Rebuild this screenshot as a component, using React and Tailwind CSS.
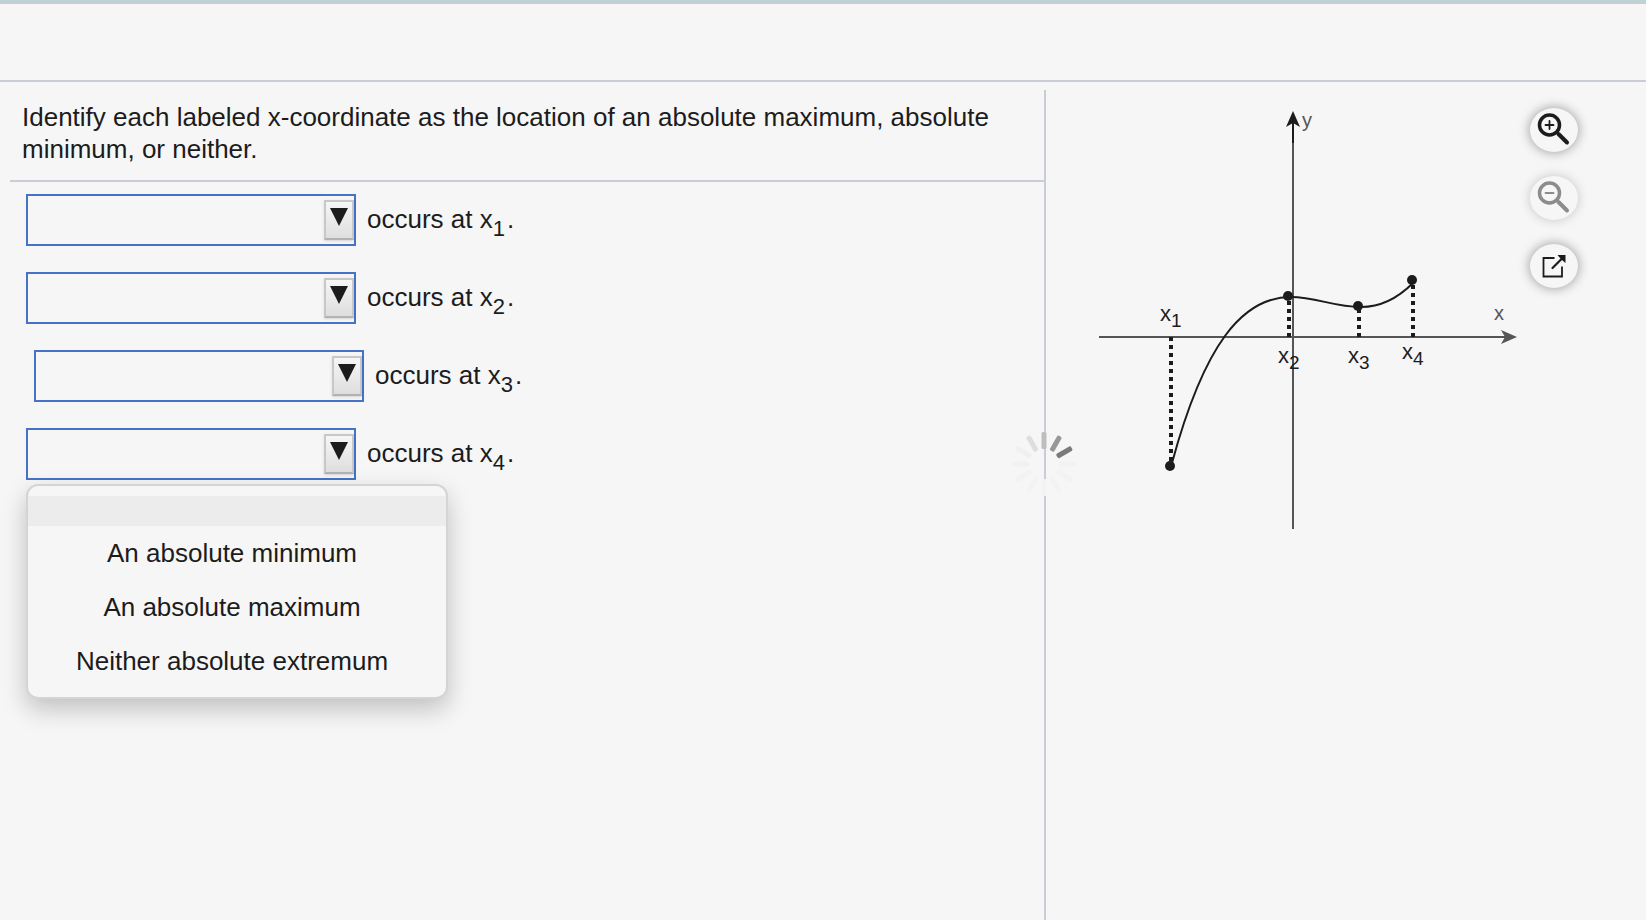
import React, { useState } from "react";

const OPTIONS = ["An absolute minimum", "An absolute maximum", "Neither absolute extremum"];

// tick colours of the loading wheel, clockwise from 12 o'clock
const TICKS = [
  "#bebebe", "#989898", "#7a7a7a", "#f2f2f2", "#f2f2f2", "#f3f3f3",
  "#f3f3f3", "#f3f3f3", "#f2f2f2", "#f1f1f1", "#f0f0f0", "#dedede"
];

function AnswerRow({ index, value, onChange, indent, children }) {
  const id = `answer-${index}`;

  return (
    <div className={indent ? "relative flex items-center pl-2" : "relative flex items-center"}>
      <div className="relative h-[52px] w-[330px]">
        <select
          id={id}
          value={value}
          onChange={(e) => onChange(e.target.value)}
          className="h-full w-full appearance-none border-2 border-[#4673c8] bg-transparent pl-2 pr-9 outline-none"
        >
          <option value=""></option>
          {OPTIONS.map((o) => (
            <option key={o} value={o}>{o}</option>
          ))}
        </select>
        <span className="pointer-events-none absolute right-0.5 top-1.5 flex h-10 w-[30px] justify-center border-2 border-[#c8c8c8] border-b-[#b2b2b2] bg-linear-to-b from-[#f6f6f6] to-[#dedede] pt-1.5 shadow-sm">
          <svg width="18" height="18" viewBox="0 0 18 18" aria-hidden="true">
            <path d="M0 0H18L9 18Z" fill="#1c1c1c" />
          </svg>
        </span>
      </div>
      <label htmlFor={id} className="ml-[11px] pb-0.5 leading-8">
        occurs at x<sub className="mr-0.5 -bottom-2 text-[22px]">{index}</sub>.
      </label>
      {children}
    </div>
  );
}

function OptionMenu({ onPick }) {
  return (
    <ul
      role="listbox"
      aria-label="Answer choices"
      className="absolute left-0 top-14 z-10 w-[422px] rounded-xl border-2 border-[#d4d4d4] bg-[#f6f6f6] pb-[9px] pt-2.5 shadow-[0_10px_24px_rgba(0,0,0,0.22)]"
    >
      <li>
        <button
          type="button"
          role="option"
          aria-selected="true"
          aria-label="No answer"
          onClick={() => onPick("")}
          className="block h-[30px] w-full bg-[#ececec]"
        />
      </li>
      {OPTIONS.map((o) => (
        <li key={o}>
          <button
            type="button"
            role="option"
            aria-selected="false"
            onClick={() => onPick(o)}
            className="block h-[54px] w-full pr-2.5 text-center hover:bg-[#ececec]"
          >
            {o}
          </button>
        </li>
      ))}
    </ul>
  );
}

function Spinner() {
  return (
    <svg className="absolute -right-8 top-[342px]" width="64" height="64" viewBox="-32 -32 64 64" role="img" aria-label="Loading">
      {TICKS.map((color, i) => (
        <rect
          key={i}
          x="-2.5" y="-32" width="5" height="17" rx="1.5"
          fill={color}
          transform={`rotate(${i * 30})`}
        />
      ))}
    </svg>
  );
}

function PointLabel({ x, y, n }) {
  return (
    <text x={x} y={y} fontSize="22" fill="#1c1c1c">
      x<tspan dy="6" fontSize="19">{n}</tspan>
    </text>
  );
}

function Graph() {
  return (
    <svg width="420" height="420" viewBox="1098 110 420 420" className="shrink-0" role="img" aria-label="Graph of a function with four labeled points">
      {/* axes */}
      <g stroke="#555555" strokeWidth="2">
        <path d="M1099 337H1508" />
        <path d="M1293 143V529" />
      </g>
      <path d="M1293 118V143" stroke="#1c1c1c" strokeWidth="2" />
      <path d="M1293 111L1300 127L1293 123L1286 127Z" fill="#1c1c1c" />
      <path d="M1517 337L1501 344L1505 337L1501 330Z" fill="#555555" />
      <text x="1302" y="127" fontSize="20" fill="#555555">y</text>
      <text x="1494" y="320" fontSize="20" fill="#555555">x</text>

      {/* dotted drops to the x axis */}
      <g stroke="#1c1c1c" strokeWidth="4" strokeDasharray="4 4">
        <path d="M1171 337V463" />
        <path d="M1289 301V337" />
        <path d="M1359 309V337" />
        <path d="M1413 285V337" />
      </g>

      <path
        d="M1172 463C1204 345 1242 297 1291 297C1316 297 1334 307 1361 307C1382 307 1398 298 1413 283"
        fill="none"
        stroke="#1c1c1c"
        strokeWidth="2"
      />
      <g fill="#1c1c1c">
        <circle cx="1170" cy="466" r="5" />
        <circle cx="1288" cy="296" r="5" />
        <circle cx="1358" cy="306" r="5" />
        <circle cx="1412" cy="280" r="5" />
      </g>

      <PointLabel x={1160} y={321} n="1" />
      <PointLabel x={1278} y={363} n="2" />
      <PointLabel x={1348} y={363} n="3" />
      <PointLabel x={1402} y={359} n="4" />
    </svg>
  );
}

function ToolButton({ label, disabled, children }) {
  return (
    <button
      type="button"
      aria-label={label}
      disabled={disabled}
      className="h-11 w-12 rounded-[50%] bg-[#f6f6f6] shadow-[0_0_12px_rgba(0,0,0,0.4)] disabled:shadow-[0_0_12px_rgba(0,0,0,0.2)]"
    >
      <svg width="48" height="44" viewBox="0 0 48 44" fill="none" stroke={disabled ? "#8c8c8c" : "#1c1c1c"} strokeLinecap="round">
        {children}
      </svg>
    </button>
  );
}

export default function App() {
  const [answers, setAnswers] = useState({ 1: "", 2: "", 3: "", 4: "" });
  const [menuOpen, setMenuOpen] = useState(true);

  const setAnswer = (n, value) => setAnswers((prev) => ({ ...prev, [n]: value }));

  return (
    <div className="flex min-h-screen flex-col overflow-hidden bg-[#f6f6f6] font-['Liberation_Sans',Arial,sans-serif] text-[26px] text-[#1c1c1c]">
      <header className="h-[82px] border-b-2 border-[#c9ccd9]">
        <div className="h-1 border-b-2 border-[#c9ccd9] bg-[#b9d6d2]" />
      </header>

      <main className="flex flex-1 pt-2">
        <section className="relative flex-1 border-r-2 border-[#c9ccd9] pl-2.5">
          <p className="border-b-2 border-[#c9ccd9] pb-[15px] pl-3 pr-10 pt-[11px] leading-8">
            Identify each labeled x-coordinate as the location of an absolute maximum, absolute minimum, or neither.
          </p>

          <div className="flex flex-col gap-[26px] pl-4 pt-3">
            {[1, 2, 3, 4].map((n) => (
              <AnswerRow
                key={n}
                index={n}
                indent={n === 3}
                value={answers[n]}
                onChange={(value) => setAnswer(n, value)}
              >
                {n === 4 && menuOpen && (
                  <OptionMenu onPick={(value) => { setAnswer(4, value); setMenuOpen(false); }} />
                )}
              </AnswerRow>
            ))}
          </div>

          <Spinner />
        </section>

        <aside className="flex w-[600px] shrink-0 gap-3 pl-[52px] pt-5">
          <Graph />
          <div className="-mt-0.5 flex flex-col gap-6">
            <ToolButton label="Zoom in">
              <circle cx="19.5" cy="17" r="10" strokeWidth="3.5" />
              <path d="M15.5 17H23.5M19.5 13V21" strokeWidth="1.8" />
              <path d="M28.5 26L37 34.5" strokeWidth="4" />
            </ToolButton>
            <ToolButton label="Zoom out" disabled>
              <circle cx="19.5" cy="17" r="10" strokeWidth="3.5" />
              <path d="M15.5 17H23.5" strokeWidth="1.8" />
              <path d="M28.5 26L37 34.5" strokeWidth="4" />
            </ToolButton>
            <ToolButton label="Open in a new window">
              <path d="M24.5 14H13.5V32.5H32V22.5" strokeWidth="1.8" strokeLinecap="butt" />
              <path d="M22.5 24L32 14.5" strokeWidth="2.2" />
              <path d="M27.5 11H35.5V19L32.5 16.5L30 14Z" fill="#1c1c1c" stroke="none" />
            </ToolButton>
          </div>
        </aside>
      </main>
    </div>
  );
}
